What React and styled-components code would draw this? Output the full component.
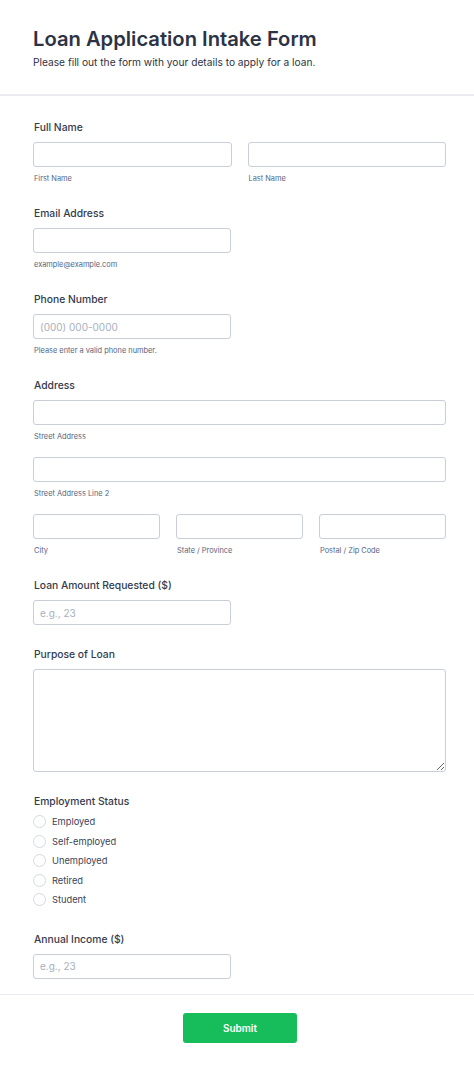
import React from "react";
import styled, { createGlobalStyle } from "styled-components";

const GlobalStyle = createGlobalStyle`
  body {
    margin: 0;
    background: #ffffff;
    font-family: Inter, "Noto Sans", sans-serif;
    color: #2c3345;
  }
`;

const statuses = ["Employed", "Self-employed", "Unemployed", "Retired", "Student"];

const App = () => {
  return (
    <>
      <GlobalStyle />
      <Page>
        <Header>
          <Title>Loan Application Intake Form</Title>
          <Subtitle>Please fill out the form with your details to apply for a loan.</Subtitle>
        </Header>

        <Form>
          <Field>
            <Label>Full Name</Label>
            <Columns cols={2}>
              <div>
                <Input />
                <SubLabel>First Name</SubLabel>
              </div>
              <div>
                <Input />
                <SubLabel>Last Name</SubLabel>
              </div>
            </Columns>
          </Field>

          <Field>
            <Label>Email Address</Label>
            <Input half />
            <SubLabel>example@example.com</SubLabel>
          </Field>

          <Field>
            <Label>Phone Number</Label>
            <Input half placeholder="(000) 000-0000" />
            <SubLabel>Please enter a valid phone number.</SubLabel>
          </Field>

          <Field>
            <Label>Address</Label>
            <Input />
            <SubLabel>Street Address</SubLabel>
            <Input spaced />
            <SubLabel>Street Address Line 2</SubLabel>
            <Columns cols={3} spaced>
              <div>
                <Input />
                <SubLabel>City</SubLabel>
              </div>
              <div>
                <Input />
                <SubLabel>State / Province</SubLabel>
              </div>
              <div>
                <Input />
                <SubLabel>Postal / Zip Code</SubLabel>
              </div>
            </Columns>
          </Field>

          <Field bare>
            <Label>Loan Amount Requested ($)</Label>
            <Input half placeholder="e.g., 23" />
          </Field>

          <Field bare>
            <Label>Purpose of Loan</Label>
            <TextArea />
          </Field>

          <Field bare>
            <Label>Employment Status</Label>
            <RadioList>
              {statuses.map((s) => (
                <RadioRow key={s}>
                  <Circle />
                  {s}
                </RadioRow>
              ))}
            </RadioList>
          </Field>

          <Field bare last>
            <Label>Annual Income ($)</Label>
            <Input half placeholder="e.g., 23" />
          </Field>
        </Form>

        <Footer>
          <SubmitButton type="button">Submit</SubmitButton>
        </Footer>
      </Page>
    </>
  );
};

export default App;

const Page = styled.div`
  width: 474px;
  min-height: 1068px;
  background: #fff;
`;

const Header = styled.div`
  padding: 25px 33px 23px;
  border-bottom: 2px solid #eaebf0;
`;

const Title = styled.h1`
  margin: 0;
  font-size: 20.2px;
  line-height: 28px;
  font-weight: 600;
  color: #2c3345;
`;

const Subtitle = styled.p`
  margin: 0;
  font-size: 10.2px;
  line-height: 18px;
  color: #2c3345;
`;

const Form = styled.div`
  padding: 22px 28px 0 33px;
  border-bottom: 1px solid #eaebf0;
`;

const Field = styled.div`
  margin-bottom: ${(p) => (p.last ? "15px" : p.bare ? "20px" : "18px")};
`;

const Label = styled.div`
  height: 18px;
  font-size: 10.3px;
  font-weight: 500;
  line-height: 18px;
  margin: 0 0 6px 1px;
  color: #333b4d;
`;

const Columns = styled.div`
  display: grid;
  grid-template-columns: repeat(${(p) => p.cols}, 1fr);
  gap: 16px;
  margin-top: ${(p) => (p.spaced ? "13px" : "0")};
`;

const Input = styled.input`
  display: block;
  box-sizing: border-box;
  width: ${(p) => (p.half ? "198px" : "100%")};
  height: 25px;
  margin-top: ${(p) => (p.spaced ? "13px" : "0")};
  padding: 0 6px;
  border: 1px solid #c9ced8;
  border-radius: 3px;
  background: #fff;
  font-family: Inter, "Noto Sans", sans-serif;
  font-size: 10px;
  color: #2c3345;
  outline: none;

  &::placeholder {
    color: #a8b0be;
  }
`;

const SubLabel = styled.div`
  height: 14px;
  font-size: 7.4px;
  line-height: 14px;
  margin: 5px 0 0 1px;
  color: #57647e;
`;

const TextArea = styled.textarea`
  display: block;
  box-sizing: border-box;
  width: 100%;
  height: 103px;
  border: 1px solid #c9ced8;
  border-radius: 3px;
  resize: vertical;
  font-family: Inter, "Noto Sans", sans-serif;
  outline: none;
`;

const RadioList = styled.div`
  display: flex;
  flex-direction: column;
  margin-top: -4px;
`;

const RadioRow = styled.label`
  display: flex;
  align-items: center;
  gap: 6px;
  height: 19.5px;
  font-size: 9.3px;
  color: #3a4357;
`;

const Circle = styled.span`
  box-sizing: border-box;
  width: 13px;
  height: 13px;
  border: 1px solid #d3d8e0;
  border-radius: 50%;
  background: #fff;
`;

const Footer = styled.div`
  display: flex;
  justify-content: center;
  padding: 18px 0 24px 6px;
`;

const SubmitButton = styled.button`
  width: 114px;
  height: 30px;
  border: none;
  border-radius: 3px;
  background: #18bd5b;
  color: #fff;
  font-family: Inter, "Noto Sans", sans-serif;
  font-size: 10px;
  font-weight: 600;
  cursor: pointer;
`;
